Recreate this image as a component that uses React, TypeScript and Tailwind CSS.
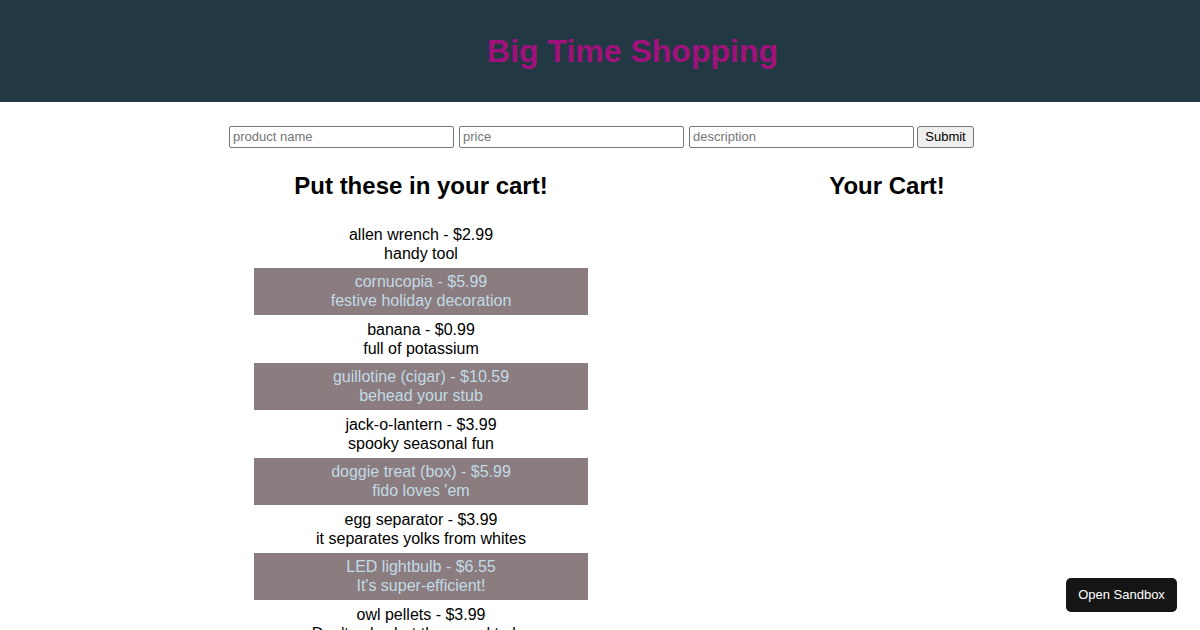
const products = [
  { name: "allen wrench", price: "2.99", description: "handy tool" },
  { name: "cornucopia", price: "5.99", description: "festive holiday decoration" },
  { name: "banana", price: "0.99", description: "full of potassium" },
  { name: "guillotine (cigar)", price: "10.59", description: "behead your stub" },
  { name: "jack-o-lantern", price: "3.99", description: "spooky seasonal fun" },
  { name: "doggie treat (box)", price: "5.99", description: "fido loves 'em" },
  { name: "egg separator", price: "3.99", description: "it separates yolks from whites" },
  { name: "LED lightbulb", price: "6.55", description: "It's super-efficient!" },
  { name: "owl pellets", price: "3.99", description: "Don't ask what they used to be" },
];

export default function App() {
  return (
    <div className="min-h-[630px] bg-white font-['Liberation_Sans',Arial,sans-serif] text-black">
      <header className="flex h-[102px] items-center justify-center bg-[#223843] pl-[65px]">
        <h1 className="text-[32px] font-bold leading-[37px] text-[#a1117b]">Big Time Shopping</h1>
      </header>

      <form className="mt-[24px] flex justify-center pl-[3px]" onSubmit={(e) => e.preventDefault()}>
        <input
          placeholder="product name"
          className="h-[22px] w-[225px] rounded-[2px] border border-[#767676] px-[3px] pb-[1px] text-[13px] placeholder:text-[#757575]"
        />
        <input
          placeholder="price"
          className="ml-[5px] h-[22px] w-[225px] rounded-[2px] border border-[#767676] px-[3px] pb-[1px] text-[13px] placeholder:text-[#757575]"
        />
        <input
          placeholder="description"
          className="ml-[5px] h-[22px] w-[225px] rounded-[2px] border border-[#767676] px-[3px] pb-[1px] text-[13px] placeholder:text-[#757575]"
        />
        <button
          type="submit"
          className="ml-[3px] h-[22px] w-[57px] rounded-[3px] border border-[#767676] bg-[#efefef] text-[13px]"
        >
          Submit
        </button>
      </form>

      <div className="ml-[188px] mt-[24px] flex">
        <div className="flex w-[466px] flex-col items-center">
          <h2 className="text-[24px] font-bold leading-[28px]">Put these in your cart!</h2>
          <ul className="mt-[20px] w-[334px]">
            {products.map((p, i) => (
              <li
                key={p.name}
                className={`py-[4.75px] text-center text-[16px] leading-[19px] ${
                  i % 2 === 1 ? "bg-[#8a7c7f] text-[#c3dbe6]" : "text-black"
                }`}
              >
                <div>
                  {p.name} - ${p.price}
                </div>
                <div>{p.description}</div>
              </li>
            ))}
          </ul>
        </div>
        <div className="flex w-[466px] flex-col items-center">
          <h2 className="text-[24px] font-bold leading-[28px]">Your Cart!</h2>
        </div>
      </div>

      <button className="fixed bottom-[18px] right-[23px] h-[34px] w-[111px] rounded-[5px] bg-[#151515] text-[13px] text-white">
        Open Sandbox
      </button>
    </div>
  );
}
